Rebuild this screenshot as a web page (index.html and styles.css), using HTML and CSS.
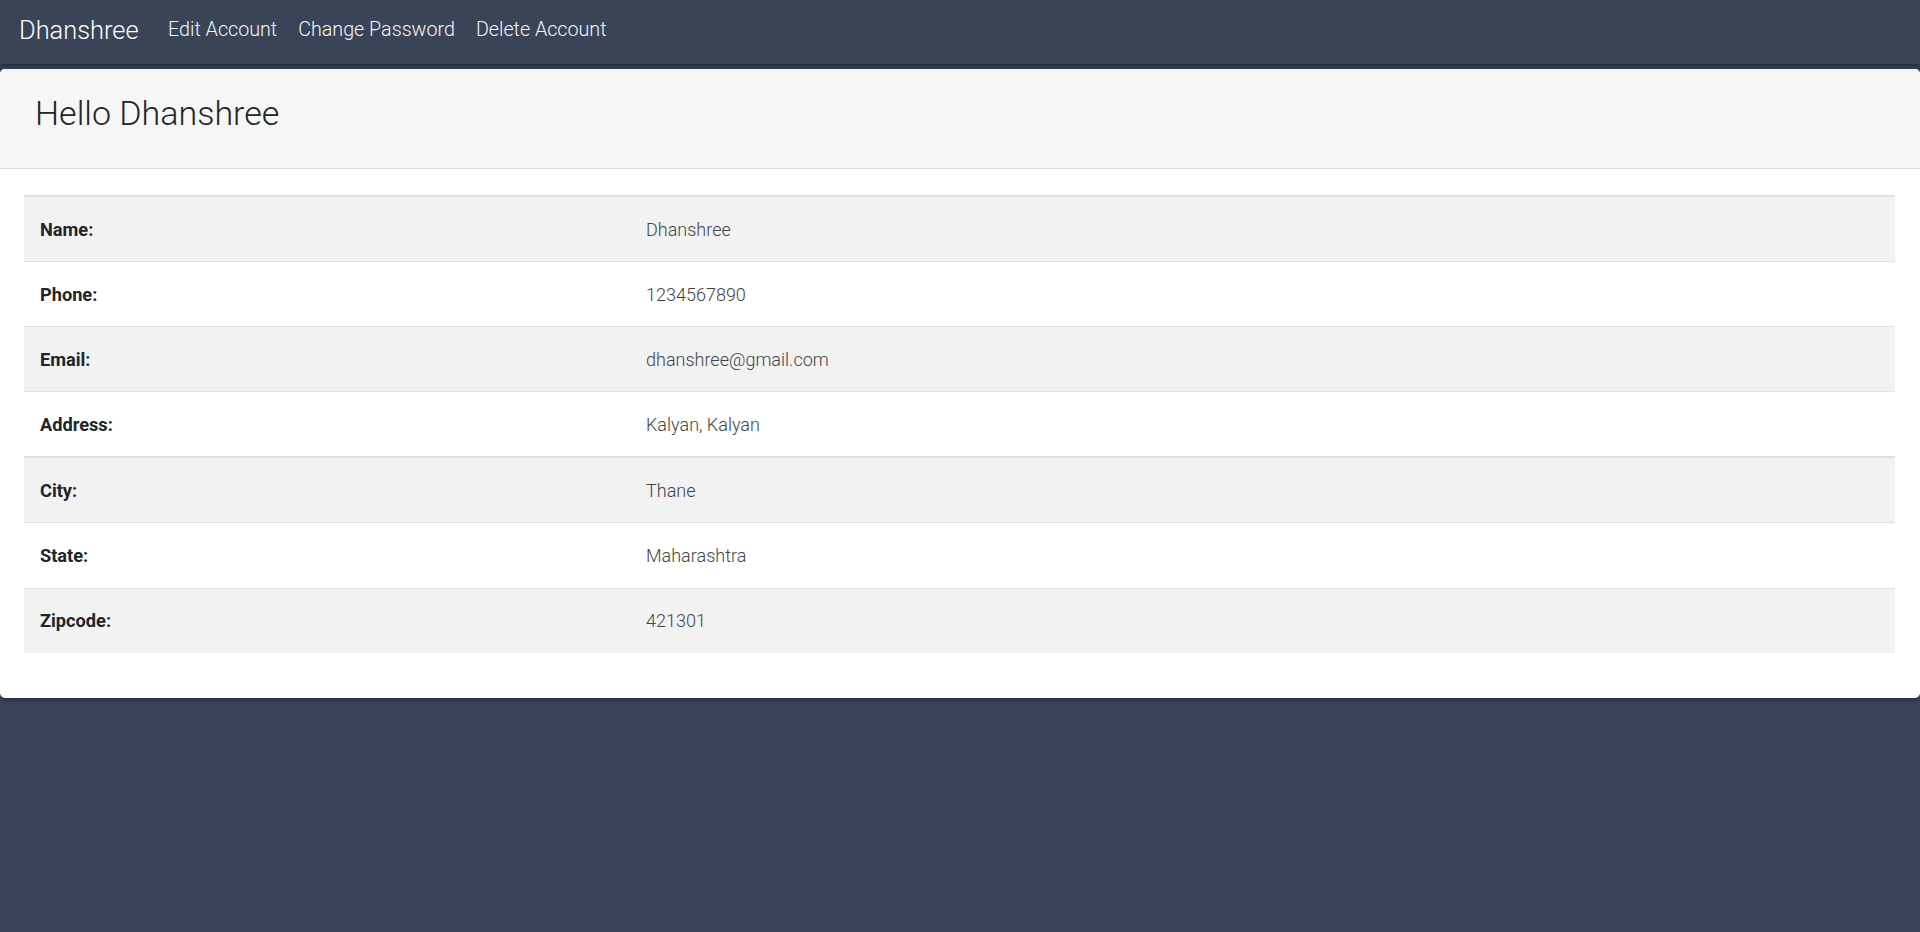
FILE: index.html
```html
<!DOCTYPE html>
<html lang="en">
<head>
<meta charset="utf-8">
<title>Dhanshree - Account</title>
<link rel="stylesheet" href="styles.css">
</head>
<body>
<nav class="navbar">
  <a class="brand" href="#">Dhanshree</a>
  <ul class="nav">
    <li><a class="nav-link" href="#">Edit Account</a></li>
    <li><a class="nav-link" href="#">Change Password</a></li>
    <li><a class="nav-link" href="#">Delete Account</a></li>
  </ul>
</nav>
<main class="page">
  <section class="card">
    <header class="card-header">
      <h3 class="card-title">Hello Dhanshree</h3>
    </header>
    <div class="card-body">
      <table class="info">
        <colgroup><col class="col-label"><col></colgroup>
        <tbody>
          <tr class="striped first"><th>Name:</th><td>Dhanshree</td></tr>
          <tr><th>Phone:</th><td>1234567890</td></tr>
          <tr class="striped"><th>Email:</th><td>dhanshree@gmail.com</td></tr>
          <tr><th>Address:</th><td>Kalyan, Kalyan</td></tr>
          <tr class="striped first"><th>City:</th><td>Thane</td></tr>
          <tr><th>State:</th><td>Maharashtra</td></tr>
          <tr class="striped"><th>Zipcode:</th><td>421301</td></tr>
        </tbody>
      </table>
    </div>
  </section>
</main>
</body>
</html>
```

FILE: styles.css
```css
* { box-sizing: border-box; }

html, body {
  margin: 0;
  padding: 0;
}

body {
  background: #394357;
  font-family: Roboto, "Liberation Sans", Arial, sans-serif;
  color: #212529;
  min-height: 932px;
}

.navbar {
  position: relative;
  z-index: 2;
  height: 64px;
  padding: 0 21px 4px 19px;
  display: flex;
  align-items: center;
  background: #394457;
  box-shadow: 0 2px 4px rgba(0, 0, 0, 0.35);
}

.brand {
  color: #ffffff;
  text-decoration: none;
  font-size: 25.4px;
  font-weight: 300;
  line-height: 34px;
  margin-right: 19px;
}

.nav {
  list-style: none;
  margin: 0;
  padding: 0;
  display: flex;
}

.nav-link {
  display: block;
  padding: 0 10.5px;
  color: #f4f6fa;
  text-decoration: none;
  font-size: 19.7px;
  font-weight: 300;
  line-height: 30px;
}

.page {
  padding-top: 5px;
}

.card {
  background: #ffffff;
  border-radius: 5px;
  overflow: hidden;
  box-shadow: 0 2px 4px rgba(0, 0, 0, 0.3);
}

.card-header {
  background: #f6f6f6;
  border-bottom: 1px solid #dcdcdc;
  padding: 22px 34px 33px 35px;
}

.card-title {
  margin: 0;
  font-size: 34px;
  font-weight: 300;
  line-height: 44px;
  color: #212529;
}

.card-body {
  padding: 26px 25px 45px 24px;
}

.info {
  width: 100%;
  border-collapse: collapse;
  table-layout: fixed;
}

.col-label { width: 606px; }

.info th,
.info td {
  padding: 16.5px 16px 15.5px;
  line-height: 32.1px;
  text-align: left;
  vertical-align: middle;
  border-top: 1px solid #dee2e6;
}

.info tr.first th,
.info tr.first td {
  border-top: 2px solid #dee2e6;
}

.info th {
  font-size: 18.2px;
  font-weight: 700;
  color: #212529;
}

.info td {
  font-size: 18px;
  font-weight: 300;
  color: #3f4449;
}

.info tr.striped { background: #f2f2f2; }
```
